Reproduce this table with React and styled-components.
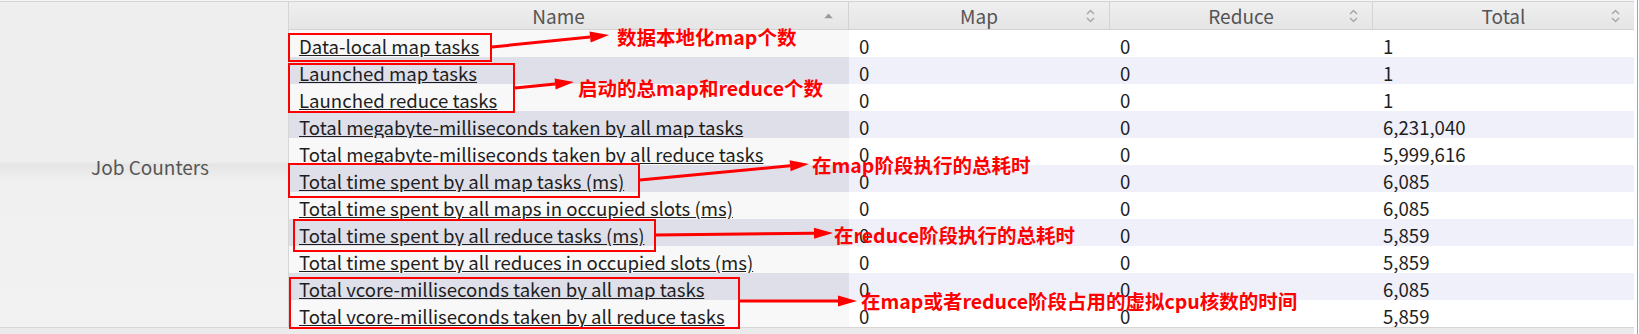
import React from 'react';
import styled, { createGlobalStyle } from 'styled-components';

const GlobalStyle = createGlobalStyle`
  html, body {
    margin: 0;
    padding: 0;
    background: #f5f5f5;
  }
  body {
    font-family: "Noto Sans CJK SC", "Noto Sans", sans-serif;
  }
`;

const Page = styled.div`
  position: relative;
  display: flex;
  width: 1639px;
  height: 334px;
  overflow: hidden;
`;

const Main = styled.div`
  display: flex;
  flex-direction: column;
  width: 1634px;
  padding-top: 1px;
`;

const Frame = styled.div`
  display: flex;
  border-top: 1px solid #d4d4d8;
`;

const GroupCell = styled.div`
  width: 289px;
  box-sizing: border-box;
  border-right: 1px solid #d6d6d6;
  display: flex;
  align-items: center;
  justify-content: center;
  padding: 4px 0 0 12px;
  color: #555;
  font-size: 19px;
  background: linear-gradient(
    to bottom,
    #eeeeee 0%,
    #eeeeee 49%,
    #e5e5e5 50%,
    #f0f0f0 55%,
    #f2f2f2 100%
  );
`;

const Counters = styled.div`
  width: 1345px;
  display: flex;
  flex-direction: column;
`;

const cols = '560px 261px 263px 261px';

const HeadRow = styled.div`
  display: grid;
  grid-template-columns: ${cols};
  height: 28px;
  box-sizing: border-box;
  border-bottom: 1px solid #d3d3d3;
  background: linear-gradient(to bottom, #efefef, #e5e5e5);
`;

const HeadCell = styled.div`
  position: relative;
  display: flex;
  align-items: center;
  justify-content: center;
  padding-right: ${p => p.$pad || 0}px;
  border-right: ${p => (p.$last ? 'none' : '1px solid #d3d3d3')};
  color: #555;
  font-size: 19px;
`;

const SortIcon = styled.svg`
  position: absolute;
  right: ${p => p.$right}px;
  top: 50%;
  transform: translateY(-50%);
`;

const Row = styled.div`
  display: grid;
  grid-template-columns: ${cols};
  height: 27px;
  background: ${p => (p.$even ? '#f0f0fb' : '#ffffff')};
`;

const Cell = styled.div`
  display: flex;
  align-items: center;
  padding: 2px 0 0 10px;
  color: #1e1e1e;
  font-size: 18.6px;
  white-space: nowrap;
  background: ${p => (p.$sorted ? (p.$even ? '#dfdfe9' : '#f8f8f8') : 'transparent')};
`;

const CounterLink = styled.a`
  color: #1e1e1e;
  text-decoration: underline;
  cursor: pointer;
`;

const Footer = styled.div`
  flex: 1;
  border-top: 1px solid #d6d6d6;
  background: #ebebeb;
`;

const RightEdge = styled.div`
  width: 5px;
  background: linear-gradient(to right, #fff 0 3px, #a3a3a3 3px 4px, #fff 4px);
`;

const Mark = styled.div`
  position: absolute;
  left: ${p => p.$x}px;
  top: ${p => p.$y}px;
  width: ${p => p.$w}px;
  height: ${p => p.$h}px;
  box-sizing: border-box;
  border: 2px solid #ff0000;
  pointer-events: none;
`;

const Note = styled.span`
  position: absolute;
  left: ${p => p.$x}px;
  top: ${p => p.$y}px;
  color: #ff0000;
  font-family: "Noto Sans CJK SC", sans-serif;
  font-weight: 700;
  font-size: 19.5px;
  line-height: 20px;
  white-space: nowrap;
`;

const ArrowLayer = styled.svg`
  position: absolute;
  left: 0;
  top: 0;
  pointer-events: none;
`;

const columns = [
  { label: 'Name', sort: 'asc', pad: 20 },
  { label: 'Map' },
  { label: 'Reduce' },
  { label: 'Total', last: true },
];

const rows = [
  ['Data-local map tasks', '0', '0', '1'],
  ['Launched map tasks', '0', '0', '1'],
  ['Launched reduce tasks', '0', '0', '1'],
  ['Total megabyte-milliseconds taken by all map tasks', '0', '0', '6,231,040'],
  ['Total megabyte-milliseconds taken by all reduce tasks', '0', '0', '5,999,616'],
  ['Total time spent by all map tasks (ms)', '0', '0', '6,085'],
  ['Total time spent by all maps in occupied slots (ms)', '0', '0', '6,085'],
  ['Total time spent by all reduce tasks (ms)', '0', '0', '5,859'],
  ['Total time spent by all reduces in occupied slots (ms)', '0', '0', '5,859'],
  ['Total vcore-milliseconds taken by all map tasks', '0', '0', '6,085'],
  ['Total vcore-milliseconds taken by all reduce tasks', '0', '0', '5,859'],
];

// red callouts drawn over the table
const marks = [
  { x: 288, y: 33, w: 204, h: 29 },
  { x: 288, y: 63, w: 227, h: 50 },
  { x: 288, y: 163, w: 352, h: 35 },
  { x: 293, y: 219, w: 363, h: 33 },
  { x: 289, y: 277, w: 451, h: 52 },
];

const arrows = [
  { from: [492, 47], to: [609, 35] },
  { from: [515, 88], to: [574, 82] },
  { from: [640, 180], to: [809, 164] },
  { from: [656, 235], to: [833, 233] },
  { from: [740, 301], to: [857, 301] },
];

const notes = [
  { x: 617, y: 27, text: '数据本地化map个数' },
  { x: 578, y: 78, text: '启动的总map和reduce个数' },
  { x: 812, y: 155, text: '在map阶段执行的总耗时' },
  { x: 834, y: 225, text: '在reduce阶段执行的总耗时' },
  { x: 861, y: 291, text: '在map或者reduce阶段占用的虚拟cpu核数的时间' },
];

const Arrow = ({ from, to }) => {
  const [x1, y1] = from;
  const [x2, y2] = to;
  const len = Math.hypot(x2 - x1, y2 - y1);
  const dx = (x2 - x1) / len;
  const dy = (y2 - y1) / len;
  const bx = x2 - dx * 19;
  const by = y2 - dy * 19;
  const nx = -dy * 5.5;
  const ny = dx * 5.5;
  return (
    <g fill="#ff0000" stroke="#ff0000">
      <line x1={x1} y1={y1} x2={bx} y2={by} strokeWidth="3" />
      <polygon
        points={`${x2},${y2} ${bx + nx},${by + ny} ${bx - nx},${by - ny}`}
        stroke="none"
      />
    </g>
  );
};

const SortMark = ({ dir }) =>
  dir === 'asc' ? (
    <SortIcon $right={15} width="9" height="5" viewBox="0 0 9 5">
      <polygon points="4.5,0 9,5 0,5" fill="#9a9a9a" />
    </SortIcon>
  ) : (
    <SortIcon $right={14} width="9" height="13" viewBox="0 0 9 13">
      <path
        d="M1 4.5 L4.5 1 L8 4.5 M1 8.5 L4.5 12 L8 8.5"
        fill="none"
        stroke="#a8a8a8"
        strokeWidth="1.5"
      />
    </SortIcon>
  );

export default function App() {
  return (
    <Page>
      <GlobalStyle />
      <Main>
        <Frame>
          <GroupCell>Job Counters</GroupCell>
          <Counters>
            <HeadRow>
              {columns.map(c => (
                <HeadCell key={c.label} $pad={c.pad} $last={c.last}>
                  {c.label}
                  <SortMark dir={c.sort} />
                </HeadCell>
              ))}
            </HeadRow>
            {rows.map((r, i) => {
              const even = i % 2 === 1;
              return (
                <Row key={r[0]} $even={even}>
                  <Cell $sorted $even={even}>
                    <CounterLink>{r[0]}</CounterLink>
                  </Cell>
                  <Cell>{r[1]}</Cell>
                  <Cell>{r[2]}</Cell>
                  <Cell>{r[3]}</Cell>
                </Row>
              );
            })}
          </Counters>
        </Frame>
        <Footer />
      </Main>
      <RightEdge />

      {marks.map((m, i) => (
        <Mark key={i} $x={m.x} $y={m.y} $w={m.w} $h={m.h} />
      ))}
      <ArrowLayer width="1639" height="334">
        {arrows.map((a, i) => (
          <Arrow key={i} {...a} />
        ))}
      </ArrowLayer>
      {notes.map(n => (
        <Note key={n.text} $x={n.x} $y={n.y}>
          {n.text}
        </Note>
      ))}
    </Page>
  );
}
